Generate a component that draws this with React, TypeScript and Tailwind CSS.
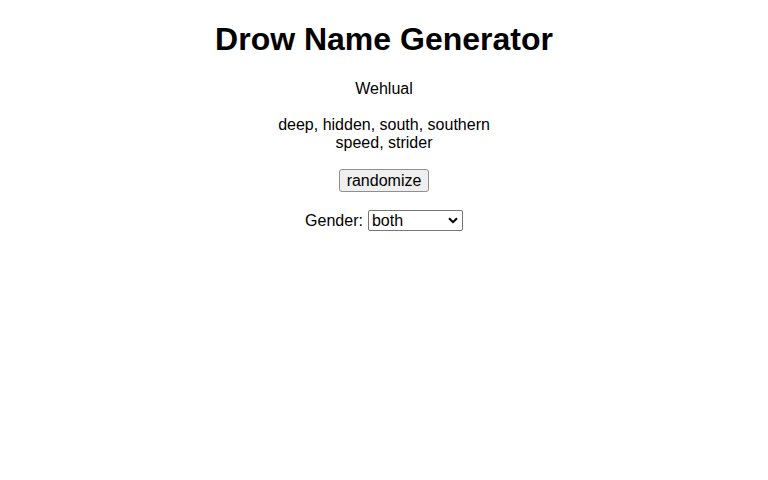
import React, { useState } from 'react';

const syllables = ['Weh', 'lu', 'al', 'Zar', 'ith', 'Ilh', 'ryn', 'Viv'];

export default function App() {
  const [name] = useState('Wehlual');
  const [gender, setGender] = useState('both');

  return (
    <div className="min-h-[480px] bg-white text-black text-center font-['Liberation_Sans',Arial,sans-serif] text-[16px] leading-[18px]">
      <h1 className="text-[32px] leading-[37px] font-bold pt-[21px] mb-[22px]">Drow Name Generator</h1>

      <p className="mb-[18px]">{name}</p>

      <p className="mb-[17px]">
        deep, hidden, south, southern
        <br />
        speed, strider
      </p>

      <div className="mb-[18px] flex justify-center">
        <button
          type="button"
          title={syllables.join('')}
          className="h-[23px] px-[7px] bg-[#efefef] border border-[#8f8f8f] rounded-[3px] text-[16px] leading-[18px]"
        >
          randomize
        </button>
      </div>

      <div className="flex justify-center items-center gap-[5px]">
        <label htmlFor="gender">Gender:</label>
        <div className="relative">
          <select
            id="gender"
            value={gender}
            onChange={(e) => setGender(e.target.value)}
            className="appearance-none w-[95px] h-[21px] pl-[3px] text-left bg-white border border-[#767676] rounded-[2px] text-[16px] leading-[18px]"
          >
            <option value="both">both</option>
            <option value="male">male</option>
            <option value="female">female</option>
          </select>
          <svg
            className="absolute right-[5px] top-[7px] pointer-events-none"
            width="10"
            height="7"
            viewBox="0 0 10 7"
          >
            <path d="M1 1.2 L5 5.2 L9 1.2" fill="none" stroke="#000" strokeWidth="2" />
          </svg>
        </div>
      </div>
    </div>
  );
}
